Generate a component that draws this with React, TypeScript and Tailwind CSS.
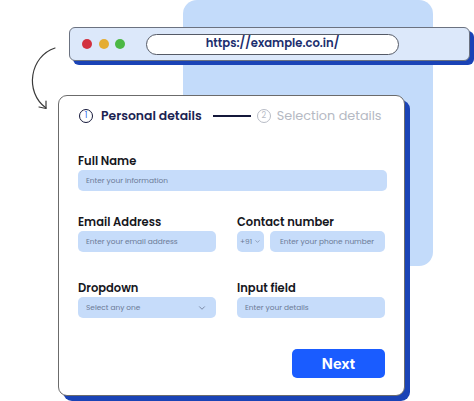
import { ChevronDown } from "lucide-react"

const font = { fontFamily: "Poppins, Inter, 'Noto Sans', sans-serif" }

function Field({ label, placeholder, className = "" }: { label: string; placeholder: string; className?: string }) {
  return (
    <div className={`flex flex-col ${className}`}>
      <span className="text-[11.5px] font-semibold leading-[16px] text-[#16171d] whitespace-nowrap">{label}</span>
      <div className="mt-[1px] h-[21px] rounded-[5px] bg-[#c6dcfa] px-[8px] flex items-center text-[7.4px] text-[#6b7a96] whitespace-nowrap">
        {placeholder}
      </div>
    </div>
  )
}

export default function App() {
  return (
    <div className="relative w-[474px] h-[401px] overflow-hidden bg-white" style={font}>
      {/* back panel */}
      <div className="absolute left-[183px] top-0 w-[250px] h-[266px] rounded-[14px] bg-[#c3dbfa]" />

      {/* curved arrow */}
      <svg className="absolute left-0 top-0" width="80" height="120" viewBox="0 0 80 120" fill="none">
        <path d="M55 48 C 30 56, 24 92, 46 108" stroke="#3a3a3a" strokeWidth="1.2" strokeLinecap="round" />
        <path d="M39 107 L46 108.5 L46 101" stroke="#3a3a3a" strokeWidth="1.2" strokeLinecap="round" strokeLinejoin="round" />
      </svg>

      <div className="relative flex flex-col">
        {/* browser bar */}
        <div className="ml-[69px] mt-[27px] w-[401px] h-[34px] rounded-[6px] border border-[#6b7280] bg-[#dce8fa] shadow-[4px_4px_0_#1a43b6] flex items-center pl-[12px]">
          <span className="w-[10px] h-[10px] rounded-full bg-[#d2313f]" />
          <span className="ml-[6.5px] w-[10px] h-[10px] rounded-full bg-[#e5ad32]" />
          <span className="ml-[6.5px] w-[10px] h-[10px] rounded-full bg-[#4cb844]" />
          <div className="ml-[21px] w-[253px] h-[21px] rounded-full border border-[#555a66] bg-white flex items-center justify-center text-[11.6px] font-semibold text-[#1c2e6e] whitespace-nowrap">
            https://example.co.in/
          </div>
        </div>

        {/* form card */}
        <div className="ml-[58px] mt-[34px] w-[347px] h-[301px] rounded-[9px] border border-[#6b6b6b] bg-white shadow-[5px_5px_0_#1a43b6] flex flex-col px-[19px]">
          {/* steps */}
          <div className="mt-[12px] flex items-center h-[16px] whitespace-nowrap">
            <span className="ml-[1px] w-[14px] h-[14px] rounded-full border-[1.5px] border-[#14183a] flex items-center justify-center text-[8px] text-[#2563eb] leading-none">1</span>
            <span className="ml-[8px] text-[12.4px] font-semibold text-[#1b2352]">Personal details</span>
            <span className="ml-[11px] w-[38px] h-[1.5px] bg-[#14183a]" />
            <span className="ml-[6px] w-[14px] h-[14px] rounded-full border-[1.5px] border-[#b8bcc6] flex items-center justify-center text-[8px] text-[#b8bcc6] leading-none">2</span>
            <span className="ml-[6px] text-[12.8px] text-[#b5b9c3]">Selection details</span>
          </div>

          <Field label="Full Name" placeholder="Enter your information" className="mt-[29px] w-[309px]" />

          <div className="mt-[23px] flex gap-[21px]">
            <Field label="Email Address" placeholder="Enter your email address" className="w-[139px]" />
            <div className="flex flex-col w-[149px]">
              <span className="text-[11.5px] font-semibold leading-[16px] text-[#16171d] whitespace-nowrap">Contact number</span>
              <div className="mt-[1px] flex gap-[6px]">
                <div className="w-[27px] h-[21px] rounded-[5px] bg-[#c6dcfa] flex items-center justify-center gap-[2px] text-[7.4px] text-[#6b7a96]">
                  +91 <ChevronDown size={7} strokeWidth={2} />
                </div>
                <div className="flex-1 h-[21px] rounded-[5px] bg-[#c6dcfa] px-[10px] flex items-center text-[7.4px] text-[#6b7a96] whitespace-nowrap">
                  Enter your phone number
                </div>
              </div>
            </div>
          </div>

          <div className="mt-[28px] flex gap-[21px]">
            <div className="flex flex-col w-[139px]">
              <span className="text-[11.5px] font-semibold leading-[16px] text-[#16171d]">Dropdown</span>
              <div className="mt-[1px] h-[21px] rounded-[5px] bg-[#c6dcfa] px-[8px] flex items-center justify-between text-[7.4px] text-[#6b7a96]">
                Select any one
                <ChevronDown size={10} strokeWidth={2} className="mr-[1px]" />
              </div>
            </div>
            <Field label="Input field" placeholder="Enter your details" className="w-[149px]" />
          </div>

          <div className="mt-[31px] flex justify-end">
            <button className="w-[93px] h-[29px] rounded-[5px] bg-[#1a5cff] text-white text-[14.5px] font-bold" style={{ fontFamily: "Inter, sans-serif" }}>
              Next
            </button>
          </div>
        </div>
      </div>
    </div>
  )
}
